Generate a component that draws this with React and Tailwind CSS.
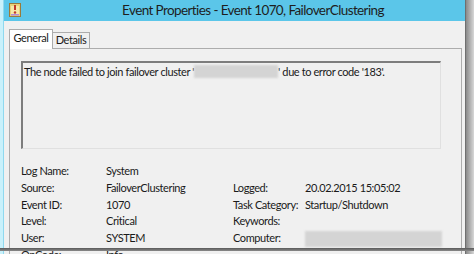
import React from 'react';

const FONT = { fontFamily: 'Lato, "Open Sans", Arial, sans-serif' };

function Blur({ className }) {
    return <span className={`inline-block bg-[#d4d4d4] blur-[1px] ${className}`} />;
}

function AppIcon() {
    return (
        <svg width="12" height="14" viewBox="0 0 12 14">
            <rect x="0.5" y="0.5" width="11" height="13" fill="#e8d27a" stroke="#9a7b3a" />
            <rect x="2" y="3" width="8" height="8" fill="#f6e9a8" />
            <path d="M6 2v5" stroke="#c0392b" strokeWidth="2" />
            <circle cx="6" cy="9.5" r="1.2" fill="#c0392b" />
            <rect x="2" y="11" width="8" height="1.5" fill="#b48bd8" />
        </svg>
    );
}

const rows = [
    ['Log Name:', 'System', '', ''],
    ['Source:', 'FailoverClustering', 'Logged:', '20.02.2015 15:05:02'],
    ['Event ID:', '1070', 'Task Category:', 'Startup/Shutdown'],
    ['Level:', 'Critical', 'Keywords:', ''],
    ['User:', 'SYSTEM', 'Computer:', 'BLUR'],
    ['OpCode:', 'Info', '', ''],
];

export default function App() {
    return (
        <div className="relative w-[474px] h-[254px] overflow-hidden flex bg-[#9c9c9c] text-[#1a1a1a]" style={FONT}>
            {/* left window frame */}
            <div className="w-[4px] bg-[#c9f1fb] border-r border-[#8fd9ef]" />

            <div className="w-[462px] flex flex-col border-r border-[#6f6f6f]">
                {/* Title bar */}
                <div className="h-[21px] bg-[#5bc6e9] flex items-center relative">
                    <div className="absolute left-[5px] top-[3px]">
                        <AppIcon />
                    </div>
                    <div className="flex-1 text-center text-[13.5px] tracking-[-0.6px] leading-[21px] text-[#1e1e1e] pl-[37px]">
                        Event Properties - Event 1070, FailoverClustering
                    </div>
                </div>

                {/* Body */}
                <div className="flex-1 bg-[#f0f0f0] pl-[5px] pr-[3px] pt-[7px] flex flex-col tracking-[-0.4px]">
                    {/* Tabs */}
                    <div className="flex items-end h-[20px] text-[11px]">
                        <div className="h-[20px] w-[44px] bg-white border border-b-0 border-[#acacac] flex items-center justify-center relative z-10 -mb-px pb-[2px]">
                            General
                        </div>
                        <div className="h-[16px] w-[37px] bg-[#f0f0f0] border border-l-0 border-b-0 border-[#acacac] flex items-center justify-center">
                            Details
                        </div>
                    </div>

                    {/* Panel */}
                    <div className="flex-1 border border-[#acacac] border-b-0 bg-[#f0f0f0] pl-[11px] pr-[20px] pt-[12px]">
                        <div className="h-[88px] whitespace-nowrap border-t-2 border-l-2 border-[#7d7d7d] border-r border-b border-r-[#e0e0e0] border-b-[#e0e0e0] px-[1px] pt-[2px] text-[11px] leading-[14px]">
                            The node failed to join failover cluster '
                            <Blur className="w-[84px] h-[13px] align-[-2px]" />
                            ' due to error code '183'.
                        </div>

                        <div className="mt-[14px] grid grid-cols-[85px_127px_72px_1fr] text-[11px] whitespace-nowrap">
                            {rows.map((r, i) => (
                                <React.Fragment key={i}>
                                    <div className="h-[16.8px] leading-[16.8px]">{r[0]}</div>
                                    <div className="h-[16.8px] leading-[16.8px]">{r[1]}</div>
                                    <div className="h-[16.8px] leading-[16.8px]">{r[2]}</div>
                                    <div className="h-[16.8px] leading-[16.8px]">
                                        {r[3] === 'BLUR' ? <Blur className="w-[137px] h-[16px] align-middle" /> : r[3]}
                                    </div>
                                </React.Fragment>
                            ))}
                        </div>
                    </div>
                </div>
            </div>

            {/* right shadow */}
            <div className="flex-1 bg-gradient-to-r from-[#8a8a8a] to-[#d8d8d8]" />

            {/* torn bottom edge shadow */}
            <div className="absolute left-0 right-0 top-[248px] h-[3px] bg-gradient-to-b from-[#5a5a5a] to-[#8a8a8a]" />
        </div>
    );
}
